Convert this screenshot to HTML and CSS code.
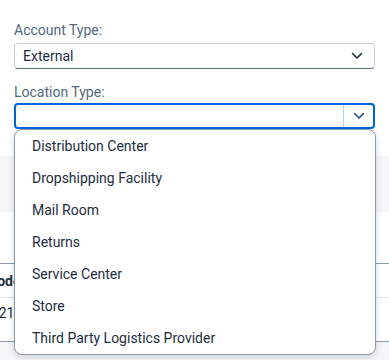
FILE: index.html
```html
<!DOCTYPE html>
<html lang="en">
  <head>
    <meta charset="UTF-8" />
    <meta name="viewport" content="width=device-width, initial-scale=1.0" />
    <title>Location Type</title>
    <link rel="stylesheet" href="styles.css">
  </head>
  <body>
    <div class="page">
      <div class="form">
        <label class="field-label">Account Type:</label>
        <div class="select">
          <span class="select-value">External</span>
          <span class="select-arrow">
            <svg width="12" height="8" viewBox="0 0 12 8"><path d="M1.5 1.5 L6 6 L10.5 1.5" fill="none" stroke="#1d2d3e" stroke-width="1.6" stroke-linecap="round" stroke-linejoin="round"/></svg>
          </span>
        </div>

        <label class="field-label second">Location Type:</label>
        <div class="select focused">
          <span class="select-value"></span>
          <span class="select-arrow split">
            <svg width="12" height="8" viewBox="0 0 12 8"><path d="M1.5 1.5 L6 6 L10.5 1.5" fill="none" stroke="#1f4d8c" stroke-width="1.6" stroke-linecap="round" stroke-linejoin="round"/></svg>
          </span>
        </div>
      </div>

      <div class="band"></div>

      <div class="table">
        <div class="table-row header"><span>Code</span></div>
        <div class="table-row"><span>1021</span></div>
      </div>
      <div class="footer"></div>

      <!-- dropdown list -->
      <ul class="popover">
        <li>Distribution Center</li>
        <li>Dropshipping Facility</li>
        <li>Mail Room</li>
        <li>Returns</li>
        <li>Service Center</li>
        <li>Store</li>
        <li>Third Party Logistics Provider</li>
      </ul>
    </div>
  </body>
</html>
```

FILE: styles.css
```css
body {
  margin: 0;
  background: #ffffff;
  font-family: Roboto, "Noto Sans", "Liberation Sans", sans-serif;
  color: #1d2d3e;
  overflow: hidden;
}

.page {
  position: relative;
  width: 389px;
  height: 360px;
  overflow: hidden;
}

.form {
  padding: 21px 14px 0 14px;
  display: flex;
  flex-direction: column;
}

.field-label {
  font-size: 14px;
  line-height: 18px;
  color: #53677e;
  margin-bottom: 4px;
}

.field-label.second {
  margin-top: 14px;
  margin-bottom: 2px;
}

.select {
  height: 26px;
  box-sizing: border-box;
  display: flex;
  align-items: center;
  border: 1px solid #c8cfd6;
  border-bottom-color: #556b82;
  border-radius: 4px;
  background: #fff;
  width: 361px;
}

.select-value {
  flex: 1;
  padding-left: 8px;
  font-size: 14px;
}

.select-arrow {
  width: 30px;
  height: 100%;
  display: flex;
  align-items: center;
  justify-content: center;
  box-sizing: border-box;
  padding-right: 4px;
}

.select.focused {
  border: 2px solid #0064d9;
}

.select-arrow.split {
  border-left: 1px solid #b8d6f7;
  padding-right: 0;
}

.band {
  margin-top: 27px;
  height: 56px;
  background: #f5f6f7;
}

.table {
  margin-top: 51px;
  border-top: 1px solid #8a9bab;
}

.table-row {
  height: 33px;
  display: flex;
  align-items: center;
  font-size: 14px;
  color: #1d2d3e;
  border-bottom: 1px solid #e0e4e8;
}

.table-row span {
  margin-left: -17px;
}

.table-row.header {
  font-weight: 700;
}

.table-row.header span {
  margin-left: -12px;
}

.table-row:last-child {
  height: 44px;
  align-items: flex-start;
  padding-top: 7px;
  box-sizing: border-box;
  border-bottom: 1px solid #8a9bab;
}

.footer {
  height: 30px;
  background: #f5f6f7;
}

.popover {
  position: absolute;
  top: 129px;
  left: 14px;
  width: 362px;
  box-sizing: border-box;
  margin: 0;
  padding: 0;
  list-style: none;
  background: #fff;
  border: 1px solid #8a9bab;
  border-radius: 8px;
  box-shadow: 0 2px 6px rgba(34, 53, 72, 0.2);
}

.popover li {
  height: 32px;
  line-height: 32px;
  padding-left: 17px;
  font-size: 14px;
  color: #1d2d3e;
}
```
